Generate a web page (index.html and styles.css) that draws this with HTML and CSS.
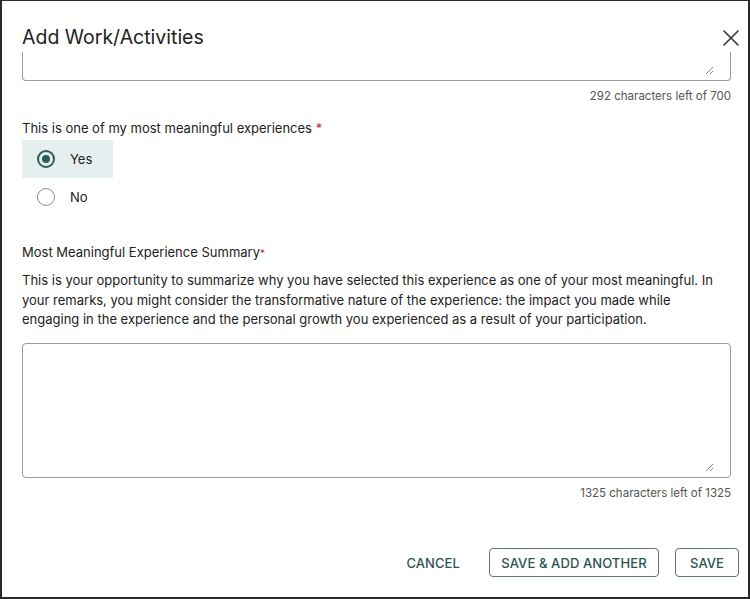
FILE: index.html
```html
<!DOCTYPE html>
<html lang="en">
<head>
<meta charset="utf-8">
<title>Add Work/Activities</title>
<link rel="stylesheet" href="styles.css">
</head>
<body>
<div class="dialog">
  <div class="dialog-header">
    <h1 class="dialog-title">Add Work/Activities</h1>
    <button class="close-btn" aria-label="Close">
      <svg width="16" height="16" viewBox="0 0 16 16"><path d="M1 1 L15 15 M15 1 L1 15" stroke="#3c3c3c" stroke-width="1.7" fill="none" stroke-linecap="round"/></svg>
    </button>
  </div>
  <div class="dialog-body">
    <div class="textarea textarea-cut">
      <svg class="grip" width="9" height="9" viewBox="0 0 9 9"><path d="M8 1 L1 8 M8 5 L5 8" stroke="#8a8a8a" stroke-width="1" fill="none"/></svg>
    </div>
    <div class="counter">292 characters left of 700</div>

    <div class="field-label">This is one of my most meaningful experiences <span class="req">*</span></div>
    <div class="radio-group">
      <label class="radio-option selected">
        <span class="radio checked"></span>
        <span class="radio-text">Yes</span>
      </label>
      <label class="radio-option">
        <span class="radio"></span>
        <span class="radio-text">No</span>
      </label>
    </div>

    <div class="field-label summary-label">Most Meaningful Experience Summary<span class="req small">*</span></div>
    <p class="help">This is your opportunity to summarize why you have selected this experience as one of your most meaningful. In your remarks, you might consider the transformative nature of the experience: the impact you made while engaging in the experience and the personal growth you experienced as a result of your participation.</p>
    <div class="textarea textarea-big">
      <svg class="grip" width="9" height="9" viewBox="0 0 9 9"><path d="M8 1 L1 8 M8 5 L5 8" stroke="#8a8a8a" stroke-width="1" fill="none"/></svg>
    </div>
    <div class="counter">1325 characters left of 1325</div>
  </div>
  <div class="dialog-actions">
    <button class="btn btn-text">CANCEL</button>
    <button class="btn btn-outline btn-wide">SAVE &amp; ADD ANOTHER</button>
    <button class="btn btn-outline btn-save">SAVE</button>
  </div>
</div>
</body>
</html>
```
FILE: styles.css
```css
html, body {
  margin: 0;
  padding: 0;
  background: #ffffff;
}
body {
  font-family: "Inter", "Liberation Sans", sans-serif;
  color: #222;
}
.dialog {
  width: 750px;
  height: 599px;
  box-sizing: border-box;
  border: 2px solid #2a2a2a;
  border-top-width: 1px;
  background: #fff;
  display: flex;
  flex-direction: column;
}
.dialog-header {
  height: 51px;
  box-sizing: border-box;
  display: flex;
  align-items: flex-start;
  justify-content: space-between;
  padding: 24px 9px 0 20px;
  flex-shrink: 0;
}
.dialog-title {
  margin: 0;
  font-size: 19.5px;
  font-weight: 400;
  line-height: 24px;
  color: #222;
  letter-spacing: 0;
}
.close-btn {
  border: none;
  background: none;
  padding: 0;
  width: 16px;
  height: 16px;
  margin-top: 5px;
  cursor: pointer;
}
.close-btn svg { display: block; }
.dialog-body {
  padding: 0 17px 0 20px;
  display: flex;
  flex-direction: column;
}
.textarea {
  border: 1px solid #9a9a9a;
  border-radius: 4px;
  position: relative;
  box-sizing: border-box;
}
.textarea-cut {
  height: 29px;
  border-top: none;
  border-top-left-radius: 0;
  border-top-right-radius: 0;
}
.textarea-big {
  height: 135px;
  margin-top: 13px;
}
.grip {
  position: absolute;
  right: 16px;
  bottom: 5px;
}
.counter {
  text-align: right;
  font-size: 11.5px;
  color: #555;
  margin-top: 8px;
  line-height: 15px;
}
.field-label {
  font-size: 13px;
  color: #222;
  margin-top: 16px;
  line-height: 16px;
}
.req {
  color: #b8323a;
}
.req.small {
  font-size: 10px;
}
.radio-group {
  display: flex;
  flex-direction: column;
  margin-top: 4px;
}
.radio-option {
  display: flex;
  align-items: center;
  gap: 15px;
  height: 38px;
  width: 91px;
  box-sizing: border-box;
  padding-left: 15px;
  font-size: 13px;
  color: #222;
}
.radio-option.selected {
  background: #e6efef;
}
.radio {
  width: 18px;
  height: 18px;
  box-sizing: border-box;
  border-radius: 50%;
  border: 1px solid #8d8d8d;
  background: #fff;
  display: flex;
  align-items: center;
  justify-content: center;
}
.radio.checked {
  border: 2px solid #2b5e5b;
  background: transparent;
}
.radio.checked::after {
  content: "";
  width: 8px;
  height: 8px;
  border-radius: 50%;
  background: #2b5e5b;
}
.summary-label {
  margin-top: 28px;
}
.help {
  margin: 10px 0 0;
  font-size: 13px;
  line-height: 19.5px;
  color: #222;
}
.dialog-actions {
  margin-top: auto;
  display: flex;
  justify-content: flex-end;
  align-items: center;
  padding: 0 9px 20px 0;
  gap: 16px;
}
.btn {
  font-family: "Inter", "Liberation Sans", sans-serif;
  font-size: 13px;
  font-weight: 500;
  color: #2b5450;
  background: #fff;
  height: 29px;
  box-sizing: border-box;
  border-radius: 4px;
  cursor: pointer;
  letter-spacing: 0.1px;
}
.btn-text {
  border: none;
  padding: 0;
  margin-right: 13px;
}
.btn-outline {
  border: 1px solid #5f7774;
}
.btn-wide {
  width: 170px;
}
.btn-save {
  width: 64px;
}
```
